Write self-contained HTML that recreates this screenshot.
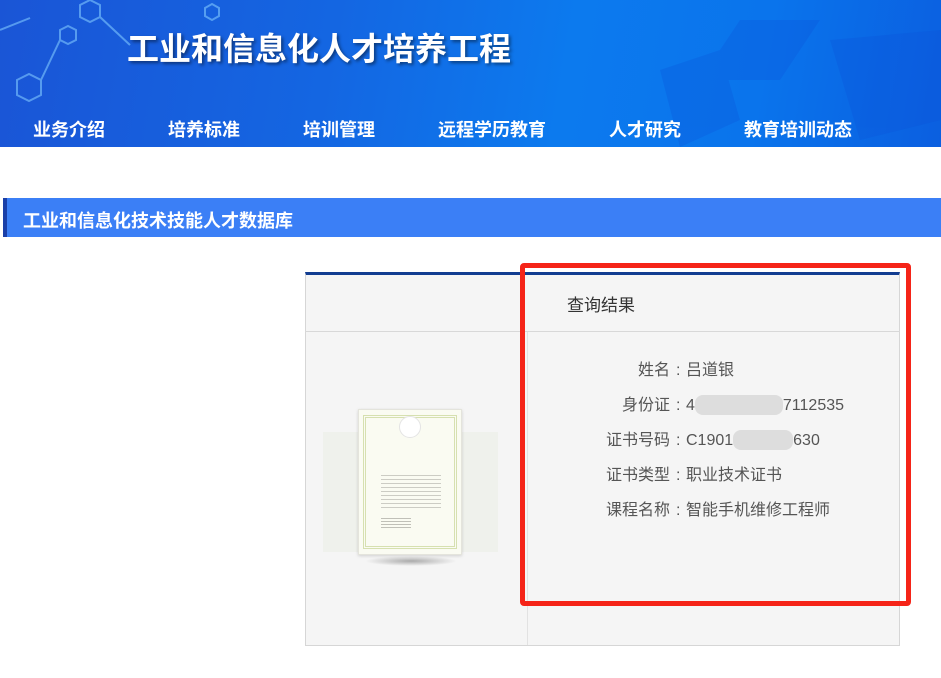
<!DOCTYPE html>
<html><head><meta charset="utf-8"><style>
*{margin:0;padding:0;box-sizing:border-box}
body{width:941px;height:678px;background:#fff;font-family:"Liberation Sans","Noto Sans CJK SC",sans-serif;position:relative;overflow:hidden}
.hdr{position:absolute;left:0;top:0;width:941px;height:147px;background:linear-gradient(100deg,#1a55d6 0%,#1466e2 35%,#0c7aee 60%,#0a74ec 80%,#0b5fe0 100%);overflow:hidden}
.title{position:absolute;left:127px;top:24px;font-size:32px;font-weight:bold;color:#fff;text-shadow:2px 2px 3px rgba(0,0,0,.45)}
.nav{position:absolute;top:116px;font-size:18px;font-weight:bold;color:#fff}
.bar{position:absolute;left:3px;top:198px;width:938px;height:39px;background:#3b7ff6;border-left:4px solid #1a3fa8}
.bar span{position:absolute;left:16px;top:9px;font-size:18px;font-weight:bold;color:#fff}
.panel{position:absolute;left:305px;top:272px;width:595px;height:374px;background:#f5f5f5;border:1px solid #d6d6d6;border-top:3px solid #123d91}
.hline{position:absolute;left:305px;top:331px;width:595px;height:1px;background:#d8d8d8}
.vline{position:absolute;left:527px;top:332px;width:1px;height:313px;background:#e2e2e2}
.red{position:absolute;left:520px;top:263px;width:391px;height:343px;border:5px solid #f52418;border-radius:4px}
.qt{position:absolute;left:567px;top:291px;font-size:17px;color:#333}
.row{position:absolute;left:0;width:941px;height:22px;font-size:16px;line-height:22px;color:#555;white-space:nowrap}
.lab{position:absolute;right:271px;top:0}
.col{position:absolute;left:676px;top:0}
.val{position:absolute;left:686px;top:0}
.blur{display:inline-block;background:#ddd;height:20px;vertical-align:-5px;border-radius:8px}
</style></head><body>
<div class="hdr">
<svg width="941" height="147" style="position:absolute;left:0;top:0">
<g stroke="#7fc8ff" stroke-width="2" fill="none" opacity=".6">
<polygon points="80,5 90,0 100,5 100,17 90,22 80,17"/>
<polygon points="17,80 29,74 41,80 41,95 29,101 17,95"/>
<polygon points="60,30 68,26 76,30 76,40 68,44 60,40"/>
<polygon points="205,8 212,4 219,8 219,16 212,20 205,16"/>
<line x1="0" y1="30" x2="30" y2="18"/><line x1="100" y1="17" x2="130" y2="45"/><line x1="41" y1="80" x2="60" y2="40"/>
</g>
<g fill="#0a4fd8" opacity=".25">
<polygon points="740,20 820,20 780,80 700,80"/><polygon points="830,40 941,30 941,120 860,140"/><polygon points="660,70 720,50 740,120 680,147"/>
</g>
</svg>
<div class="title">工业和信息化人才培养工程</div>
<div class="nav" style="left:33px">业务介绍</div>
<div class="nav" style="left:168px">培养标准</div>
<div class="nav" style="left:303px">培训管理</div>
<div class="nav" style="left:438px">远程学历教育</div>
<div class="nav" style="left:609px">人才研究</div>
<div class="nav" style="left:744px">教育培训动态</div>
</div>
<div class="bar"><span>工业和信息化技术技能人才数据库</span></div>
<div class="panel"></div>
<div class="hline"></div>
<div class="vline"></div>
<div style="position:absolute;left:323px;top:432px;width:40px;height:120px;background:#eef0ea;opacity:.8"></div>
<div style="position:absolute;left:458px;top:432px;width:40px;height:120px;background:#eef0ea;opacity:.8"></div>
<div style="position:absolute;left:365px;top:556px;width:92px;height:10px;border-radius:50%;background:radial-gradient(ellipse,#aaa,rgba(200,200,200,0) 70%)"></div>
<div style="position:absolute;left:358px;top:409px;width:104px;height:146px;background:#fafbf2;border:1px solid #e4e4dc;box-shadow:0 1px 3px rgba(0,0,0,.15)">
<div style="position:absolute;left:4px;top:5px;right:4px;bottom:5px;border:3px double #d6e0b0"></div>
<div style="position:absolute;left:40px;top:6px;width:22px;height:22px;border-radius:50%;background:#fff;border:1px solid #e4e4e4"></div>
<div style="position:absolute;left:22px;top:65px;width:60px;height:35px;background:repeating-linear-gradient(#b8b8b0 0 1px,transparent 1px 4px);opacity:.7"></div>
<div style="position:absolute;left:22px;top:108px;width:30px;height:10px;background:repeating-linear-gradient(#c0c0b8 0 1px,transparent 1px 3px)"></div>
</div>
<div class="qt">查询结果</div>
<div class="row" style="top:360px"><span class="lab">姓名</span><span class="col">:</span><span class="val">吕道银</span></div>
<div class="row" style="top:395px"><span class="lab">身份证</span><span class="col">:</span><span class="val">4<span class="blur" style="width:88px"></span>7112535</span></div>
<div class="row" style="top:430px"><span class="lab">证书号码</span><span class="col">:</span><span class="val">C1901<span class="blur" style="width:60px"></span>630</span></div>
<div class="row" style="top:465px"><span class="lab">证书类型</span><span class="col">:</span><span class="val">职业技术证书</span></div>
<div class="row" style="top:500px"><span class="lab">课程名称</span><span class="col">:</span><span class="val">智能手机维修工程师</span></div>
<div class="red"></div>
</body></html>
